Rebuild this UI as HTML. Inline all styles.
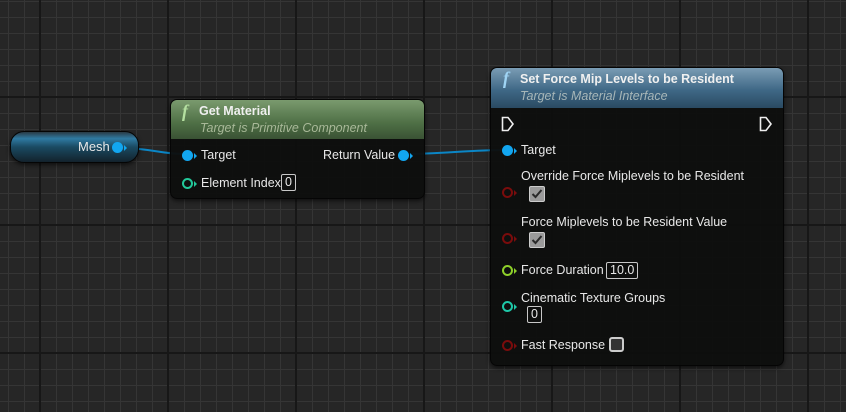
<!DOCTYPE html>
<html><head><style>
*{margin:0;padding:0;box-sizing:border-box}
body{width:846px;height:412px;overflow:hidden;position:relative;font-family:"Liberation Sans",sans-serif;color:#e8e8e8;font-size:12.5px;background:#262626}
.a{position:absolute;white-space:nowrap}
.node{position:absolute;background:rgba(14,15,14,0.96);border:1px solid #050505;border-radius:7px;box-shadow:0 2px 4px rgba(0,0,0,.6);overflow:hidden}
.hdr{position:absolute;left:0;right:0;top:0}
.t{font-weight:bold;font-size:12.5px;color:#f0f0f0}
.s{font-style:italic;font-size:12.5px;color:#a9b39a}
.pin{position:absolute;width:11px;height:11px;border-radius:50%}
.arr{position:absolute;width:0;height:0;border-top:3px solid transparent;border-bottom:3px solid transparent}
.box{position:absolute;border:1px solid #c8c8c8;border-radius:2px;font-size:12.5px;padding:0 3px;line-height:15px;height:17px}
.cb{position:absolute;width:16px;height:16px;background:#9a9a9a;border-radius:2px;border:1px solid #ccc}
.f{font-family:"Liberation Serif",serif;font-style:italic;font-weight:bold;font-size:18px}
</style></head><body>
<svg class="a" style="left:0;top:0" width="846" height="412">
<defs>
<pattern id="m" width="16" height="16" patternUnits="userSpaceOnUse" x="8" y="1">
<rect x="0" y="0" width="1" height="16" fill="#353535"/><rect x="0" y="0" width="16" height="1" fill="#353535"/>
</pattern>
</defs>
<rect width="846" height="412" fill="url(#m)"/>
<g fill="#171717">
<rect x="39" y="0" width="2" height="412"/><rect x="167" y="0" width="2" height="412"/><rect x="295" y="0" width="2" height="412"/><rect x="423" y="0" width="2" height="412"/><rect x="551" y="0" width="2" height="412"/><rect x="679" y="0" width="2" height="412"/><rect x="807" y="0" width="2" height="412"/>
<rect x="0" y="96" width="846" height="2"/><rect x="0" y="224" width="846" height="2"/><rect x="0" y="352" width="846" height="2"/>
</g>
<path d="M122 148 C150 148,160 154,186 154" stroke="#0b86c6" stroke-width="2" fill="none"/>
<path d="M404 154 C440 154,470 150,506 150" stroke="#0b86c6" stroke-width="2" fill="none"/>
</svg>
<!-- Mesh -->
<div class="a" style="left:10px;top:131px;width:129px;height:32px;border-radius:14px;border:1px solid #050505;background:linear-gradient(180deg,#2a3a44 0%,#2f7aa2 22%,#1a4a62 50%,#13222c 100%);box-shadow:0 2px 4px rgba(0,0,0,.6)"></div>
<div class="a" style="left:78px;top:139px;font-size:13px">Mesh</div>
<div class="pin" style="left:112px;top:142px;background:#12a6f0"></div>
<div class="arr" style="left:124px;top:145px;border-left:3px solid #12a6f0"></div>
<!-- Get Material -->
<div class="node" style="left:170px;top:99px;width:255px;height:100px">
<div class="hdr" style="height:39px;background:linear-gradient(180deg,#7a9a6e 0%,#4e6f45 60%,#3a5234 100%)"></div>
<div class="a f" style="left:11px;top:1px;color:#b4dfa0">f</div>
<div class="a t" style="left:28px;top:4px">Get Material</div>
<div class="a s" style="left:29px;top:21px;color:#a8b898">Target is Primitive Component</div>
<div class="pin" style="left:11px;top:50px;background:#12a6f0"></div>
<div class="arr" style="left:23px;top:53px;border-left:3px solid #12a6f0"></div>
<div class="a" style="left:30px;top:48px">Target</div>
<div class="a" style="left:152px;top:48px">Return Value</div>
<div class="pin" style="left:227px;top:50px;background:#12a6f0"></div>
<div class="arr" style="left:239px;top:53px;border-left:3px solid #12a6f0"></div>
<div class="pin" style="left:11px;top:78px;border:2px solid #22c89a"></div>
<div class="arr" style="left:23px;top:81px;border-left:3px solid #22c89a"></div>
<div class="a" style="left:30px;top:76px">Element Index</div>
<div class="box" style="left:110px;top:74px">0</div>
</div>
<!-- Set Force -->
<div class="node" style="left:490px;top:67px;width:294px;height:299px">
<div class="hdr" style="height:40px;background:linear-gradient(180deg,#7a9cb4 0%,#3f6886 55%,#2a4a62 100%)"></div>
<div class="a f" style="left:12px;top:0px;color:#9fd4f4">f</div>
<div class="a t" style="left:29px;top:4px">Set Force Mip Levels to be Resident</div>
<div class="a s" style="left:29px;top:21px;color:#a6b6b8">Target is Material Interface</div>
<svg class="a" style="left:10px;top:48px" width="14" height="16"><path d="M1.5 1.5 H7 L12 8 L7 14.5 H1.5 Z" fill="none" stroke="#eee" stroke-width="1.6"/></svg>
<svg class="a" style="left:268px;top:48px" width="14" height="16"><path d="M1.5 1.5 H7 L12 8 L7 14.5 H1.5 Z" fill="none" stroke="#eee" stroke-width="1.6"/></svg>
<div class="pin" style="left:11px;top:77px;background:#12a6f0"></div>
<div class="arr" style="left:23px;top:80px;border-left:3px solid #12a6f0"></div>
<div class="a" style="left:30px;top:75px">Target</div>
<div class="pin" style="left:11px;top:119px;border:2px solid #7a0c0c"></div>
<div class="arr" style="left:23px;top:122px;border-left:3px solid #7a0c0c"></div>
<div class="a" style="left:30px;top:101px">Override Force Miplevels to be Resident</div>
<div class="cb" style="left:38px;top:118px"><svg width="14" height="14" style="position:absolute;left:0;top:0"><path d="M2.5 7 L5.5 10 L11.5 3" stroke="#2a2a2a" stroke-width="2" fill="none"/></svg></div>
<div class="pin" style="left:11px;top:165px;border:2px solid #7a0c0c"></div>
<div class="arr" style="left:23px;top:168px;border-left:3px solid #7a0c0c"></div>
<div class="a" style="left:30px;top:147px">Force Miplevels to be Resident Value</div>
<div class="cb" style="left:38px;top:164px"><svg width="14" height="14" style="position:absolute;left:0;top:0"><path d="M2.5 7 L5.5 10 L11.5 3" stroke="#2a2a2a" stroke-width="2" fill="none"/></svg></div>
<div class="pin" style="left:11px;top:197px;border:2px solid #8ed02a"></div>
<div class="arr" style="left:23px;top:200px;border-left:3px solid #8ed02a"></div>
<div class="a" style="left:30px;top:195px">Force Duration</div>
<div class="box" style="left:115px;top:194px">10.0</div>
<div class="pin" style="left:11px;top:233px;border:2px solid #1ec8a8"></div>
<div class="arr" style="left:23px;top:236px;border-left:3px solid #1ec8a8"></div>
<div class="a" style="left:30px;top:223px">Cinematic Texture Groups</div>
<div class="box" style="left:36px;top:238px">0</div>
<div class="pin" style="left:11px;top:272px;border:2px solid #7a0c0c"></div>
<div class="arr" style="left:23px;top:275px;border-left:3px solid #7a0c0c"></div>
<div class="a" style="left:30px;top:270px">Fast Response</div>
<div class="a" style="left:118px;top:269px;width:15px;height:15px;border:2px solid #ccc;border-radius:3px;background:#333"></div>
</div>
</body></html>
